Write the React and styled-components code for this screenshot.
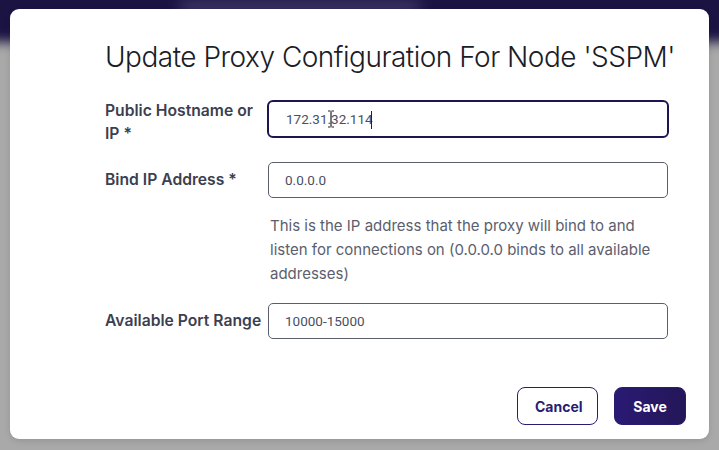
import React from "react"
import styled, { createGlobalStyle } from "styled-components"

const GlobalStyle = createGlobalStyle`
  html, body {
    margin: 0;
    padding: 0;
    height: 100%;
  }
  body {
    font-family: Inter, "Noto Sans", sans-serif;
    background: #a9a9a9;
    overflow: hidden;
  }
`

const fields = [
  { id: "host", label: "Public Hostname or IP *", value: "172.31.32.114", focused: true },
  {
    id: "bind",
    label: "Bind IP Address *",
    value: "0.0.0.0",
    help: "This is the IP address that the proxy will bind to and listen for connections on (0.0.0.0 binds to all available addresses)",
  },
  { id: "ports", label: "Available Port Range", value: "10000-15000" },
]

const App = () => {
  return (
    <>
      <GlobalStyle />
      <Backdrop>
        <HeaderBlur>
          <HeaderGhost />
        </HeaderBlur>
        <Modal>
          <Title>Update Proxy Configuration For Node 'SSPM'</Title>
          <Form>
            {fields.map((f) => (
              <React.Fragment key={f.id}>
                <Label htmlFor={f.id} $wrapped={f.focused}>{f.label}</Label>
                <FieldCell>
                  <InputWrap>
                    <Input id={f.id} defaultValue={f.value} $focused={f.focused} readOnly />
                    {f.focused && (
                      <>
                        <Caret />
                        <IBeam width="8" height="18" viewBox="0 0 8 18">
                          <path d="M1 1h2.5M4.5 1H7M4 1.5v15M1 17h2.5M4.5 17H7" stroke="#222" strokeWidth="1.2" fill="none" />
                        </IBeam>
                      </>
                    )}
                  </InputWrap>
                  {f.help && <Help>{f.help}</Help>}
                </FieldCell>
              </React.Fragment>
            ))}
          </Form>
          <Footer>
            <Button $variant="outline">Cancel</Button>
            <Button $variant="solid">Save</Button>
          </Footer>
        </Modal>
      </Backdrop>
    </>
  )
}

const Backdrop = styled.div`
  position: relative;
  width: 719px;
  height: 450px;
  background: #a9a9a9;
  overflow: hidden;
  display: flex;
  flex-direction: column;
  align-items: center;
  padding-top: 9px;
  box-sizing: border-box;
`

const HeaderBlur = styled.div`
  position: absolute;
  top: -20px;
  left: -20px;
  right: -20px;
  height: 62px;
  background: #1b1443;
  filter: blur(6px);
`

const HeaderGhost = styled.div`
  position: absolute;
  top: 22px;
  left: 200px;
  width: 240px;
  height: 10px;
  background: #4a4470;
  filter: blur(4px);
`

const Modal = styled.div`
  position: relative;
  width: 699px;
  height: 430px;
  background: #ffffff;
  border-radius: 9px;
  box-shadow: 0 2px 6px rgba(0, 0, 0, 0.12);
  box-sizing: border-box;
  padding: 28px 23px 14px 95px;
  display: flex;
  flex-direction: column;
`

const Title = styled.h1`
  margin: 0;
  font-family: Inter, sans-serif;
  font-weight: 300;
  font-size: 28px;
  line-height: 40px;
  letter-spacing: -0.5px;
  color: #1b1c26;
  white-space: nowrap;
`

const Form = styled.div`
  margin-top: 24px;
  display: grid;
  grid-template-columns: 158px 400px;
  column-gap: 5px;
  row-gap: 23px;
  align-items: start;
`

const Label = styled.label`
  font-size: 15.7px;
  font-weight: 600;
  line-height: 23px;
  color: #3d3f4f;
  padding-top: ${(p) => (p.$wrapped ? "0" : "6px")};
  margin: ${(p) => (p.$wrapped ? "-2px 0 -6px" : "0")};
`

const FieldCell = styled.div`
  display: flex;
  flex-direction: column;
`

const InputWrap = styled.div`
  position: relative;
`

const Input = styled.input`
  box-sizing: border-box;
  width: 100%;
  height: 36px;
  margin: 0;
  padding: 0 16px;
  font-family: Roboto, "Liberation Sans", sans-serif;
  font-size: 13.5px;
  color: #4a4f63;
  background: #fff;
  border: 1px solid #5a5e6e;
  border-radius: 5px;
  outline: none;
  ${(p) =>
    p.$focused &&
    `
    border: 2px solid #1e1550;
    border-radius: 6px;
    height: 38px;
    width: calc(100% + 2px);
    margin: -1px 0 -1px -1px;
    padding: 0 17px;
  `}
`

const Caret = styled.span`
  position: absolute;
  left: 103px;
  top: 10px;
  width: 1px;
  height: 18px;
  background: #222;
`

const IBeam = styled.svg`
  position: absolute;
  left: 59px;
  top: 9px;
  pointer-events: none;
`

const Help = styled.p`
  margin: 16px 0 -6px 2px;
  font-size: 15px;
  line-height: 24px;
  color: #5b5e6d;
`

const Footer = styled.div`
  margin-top: auto;
  display: flex;
  justify-content: flex-end;
  gap: 16px;
`

const Button = styled.button`
  box-sizing: border-box;
  height: 38px;
  padding: 0 17px;
  border-radius: 8px;
  font-family: Inter, sans-serif;
  font-size: 14px;
  font-weight: 700;
  cursor: pointer;
  border: 1px solid #2a1c72;
  background: ${(p) => (p.$variant === "solid" ? "linear-gradient(90deg, #2a1a74, #241658)" : "#fff")};
  color: ${(p) => (p.$variant === "solid" ? "#fff" : "#2a1c72")};
  ${(p) => p.$variant === "outline" && "width: 81px;"}
  ${(p) => p.$variant === "solid" && "width: 72px;"}
`

export default App
